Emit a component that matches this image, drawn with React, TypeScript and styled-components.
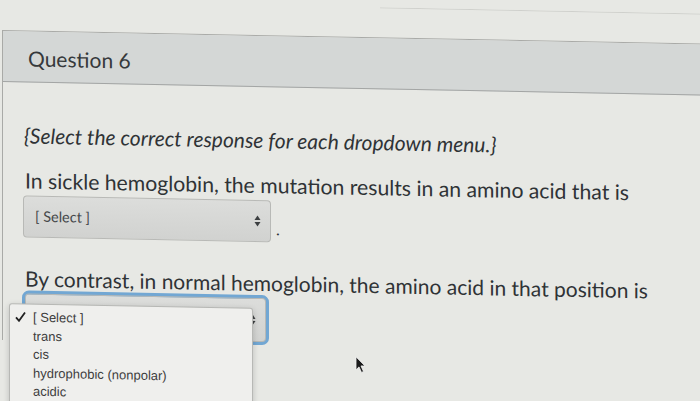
import styled, { createGlobalStyle } from 'styled-components';

const GlobalStyle = createGlobalStyle`
  html, body {
    margin: 0;
    padding: 0;
    background: #e7e8e4;
    overflow: hidden;
  }
  body {
    font-family: Lato, "Open Sans", sans-serif;
    color: #2f3336;
  }
`;

// the whole view leans a little, as the screen was shot at an angle
const Page = styled.div`
  position: relative;
  width: 700px;
  height: 401px;
  overflow: hidden;
  transform: skewY(1.1deg);
  transform-origin: 0 0;
`;

const TopRule = styled.div`
  height: 0;
  margin-left: 380px;
  border-bottom: 1px solid #cfd0cc;
`;

const QuestionCard = styled.section`
  margin: 29px -20px 0 2px;
  border-left: 1px solid #a9aaa7;
  border-top: 1px solid #a9aaa7;
`;

const CardHeader = styled.header`
  display: flex;
  align-items: center;
  height: 48px;
  padding: 2px 0 0 25px;
  background: #d4d7d6;
  border-bottom: 1px solid #a3a5a4;
  font-size: 21px;
  color: #36393b;
`;

const CardBody = styled.div`
  padding: 40px 0 0 20px;
`;

const Instruction = styled.p`
  margin: 0 0 19px;
  padding-left: 1px;
  font-size: 21px;
  font-style: italic;
  line-height: 26px;
`;

const Prompt = styled.p<{ $size: number }>`
  margin: 0;
  width: 670px;
  padding-left: 2px;
  font-size: ${({ $size }) => $size}px;
  line-height: 26px;
`;

// sentence text sits above the focus ring of the select that follows it
const Sentence = styled.span`
  position: relative;
  z-index: 1;
`;

const SelectWrap = styled.span<{ $focused?: boolean }>`
  position: relative;
  display: inline-block;
  vertical-align: top;
  margin: ${({ $focused }) => ($focused ? '-1px 0 0 -3px' : '2px 0 0 -2px')};
  padding: ${({ $focused }) => ($focused ? '3px' : '0')};
  border-radius: 7px;
  background: ${({ $focused }) => ($focused ? '#72a7d3' : 'transparent')};
`;

const SelectBox = styled.span<{ $focused?: boolean }>`
  display: flex;
  align-items: center;
  justify-content: space-between;
  box-sizing: border-box;
  width: ${({ $focused }) => ($focused ? '241px' : '248px')};
  height: ${({ $focused }) => ($focused ? '44px' : '42px')};
  padding: 0 9px 0 11px;
  border: 1px solid #b8b9b6;
  border-radius: 4px;
  background: linear-gradient(#dcdddb, #d1d2d0);
  font-size: 14.5px;
  line-height: 1;
  color: #45484a;
`;

const Arrows = styled.svg`
  width: 7px;
  height: 12px;
  fill: #3c3f41;
`;

const Period = styled.span`
  display: inline-block;
  margin: 23px 0 0 5px;
  font-size: 16px;
  line-height: 16px;
`;

const SecondPrompt = styled(Prompt)`
  margin-top: 28px;
`;

const Menu = styled.ul`
  position: absolute;
  left: -13px;
  top: 13px;
  z-index: 2;
  width: 242px;
  height: 110px;
  margin: 0;
  padding: 4px 0 0;
  list-style: none;
  background: #efefed;
  border: 1px solid #b7b8b5;
  border-radius: 3px 3px 0 0;
  box-shadow: 0 2px 6px rgba(0, 0, 0, 0.18);
  font-family: "Liberation Sans", Arial, sans-serif;
  font-size: 13px;
`;

const MenuItem = styled.li`
  position: relative;
  display: flex;
  align-items: center;
  height: 18.5px;
  padding-left: 23px;
  color: #3d3d3d;
`;

const Check = styled.svg`
  position: absolute;
  left: 5px;
  top: 3px;
  width: 11px;
  height: 11px;
`;

const Cursor = styled.svg`
  position: absolute;
  left: 355px;
  top: 349px;
  width: 11px;
  height: 18px;
`;

function UpDown() {
  return (
    <Arrows viewBox="0 0 7 12">
      <path d="M3.5 0.5 L6.5 5 L0.5 5 Z" />
      <path d="M0.5 7 L6.5 7 L3.5 11.5 Z" />
    </Arrows>
  );
}

const options = ['[ Select ]', 'trans', 'cis', 'hydrophobic (nonpolar)', 'acidic'];

export default function App() {
  return (
    <Page>
      <GlobalStyle />
      <TopRule />
      <QuestionCard>
        <CardHeader>Question 6</CardHeader>
        <CardBody>
          <Instruction>{'{Select the correct response for each dropdown menu.}'}</Instruction>
          <Prompt $size={21.2}>
            <Sentence>In sickle hemoglobin, the mutation results in an amino acid that is</Sentence>{' '}
            <SelectWrap>
              <SelectBox>
                [ Select ]
                <UpDown />
              </SelectBox>
            </SelectWrap>
            <Period>.</Period>
          </Prompt>
          <SecondPrompt $size={21}>
            <Sentence>By contrast, in normal hemoglobin, the amino acid in that position is</Sentence>{' '}
            <SelectWrap $focused>
              <SelectBox $focused>
                <span />
                <UpDown />
              </SelectBox>
              <Menu>
                {options.map((o, i) => (
                  <MenuItem key={o}>
                    {i === 0 && (
                      <Check viewBox="0 0 11 11">
                        <path d="M1 6 L4 9.5 L10 1" fill="none" stroke="#222" strokeWidth="1.8" />
                      </Check>
                    )}
                    {o}
                  </MenuItem>
                ))}
              </Menu>
            </SelectWrap>
          </SecondPrompt>
        </CardBody>
      </QuestionCard>
      <Cursor viewBox="0 0 11 18">
        <path d="M1 1 L1 14 L4 11 L6.5 16.5 L8.5 15.5 L6 10 L10 10 Z" fill="#1b1b1b" stroke="#f4f4f4" strokeWidth="0.8" />
      </Cursor>
    </Page>
  );
}
